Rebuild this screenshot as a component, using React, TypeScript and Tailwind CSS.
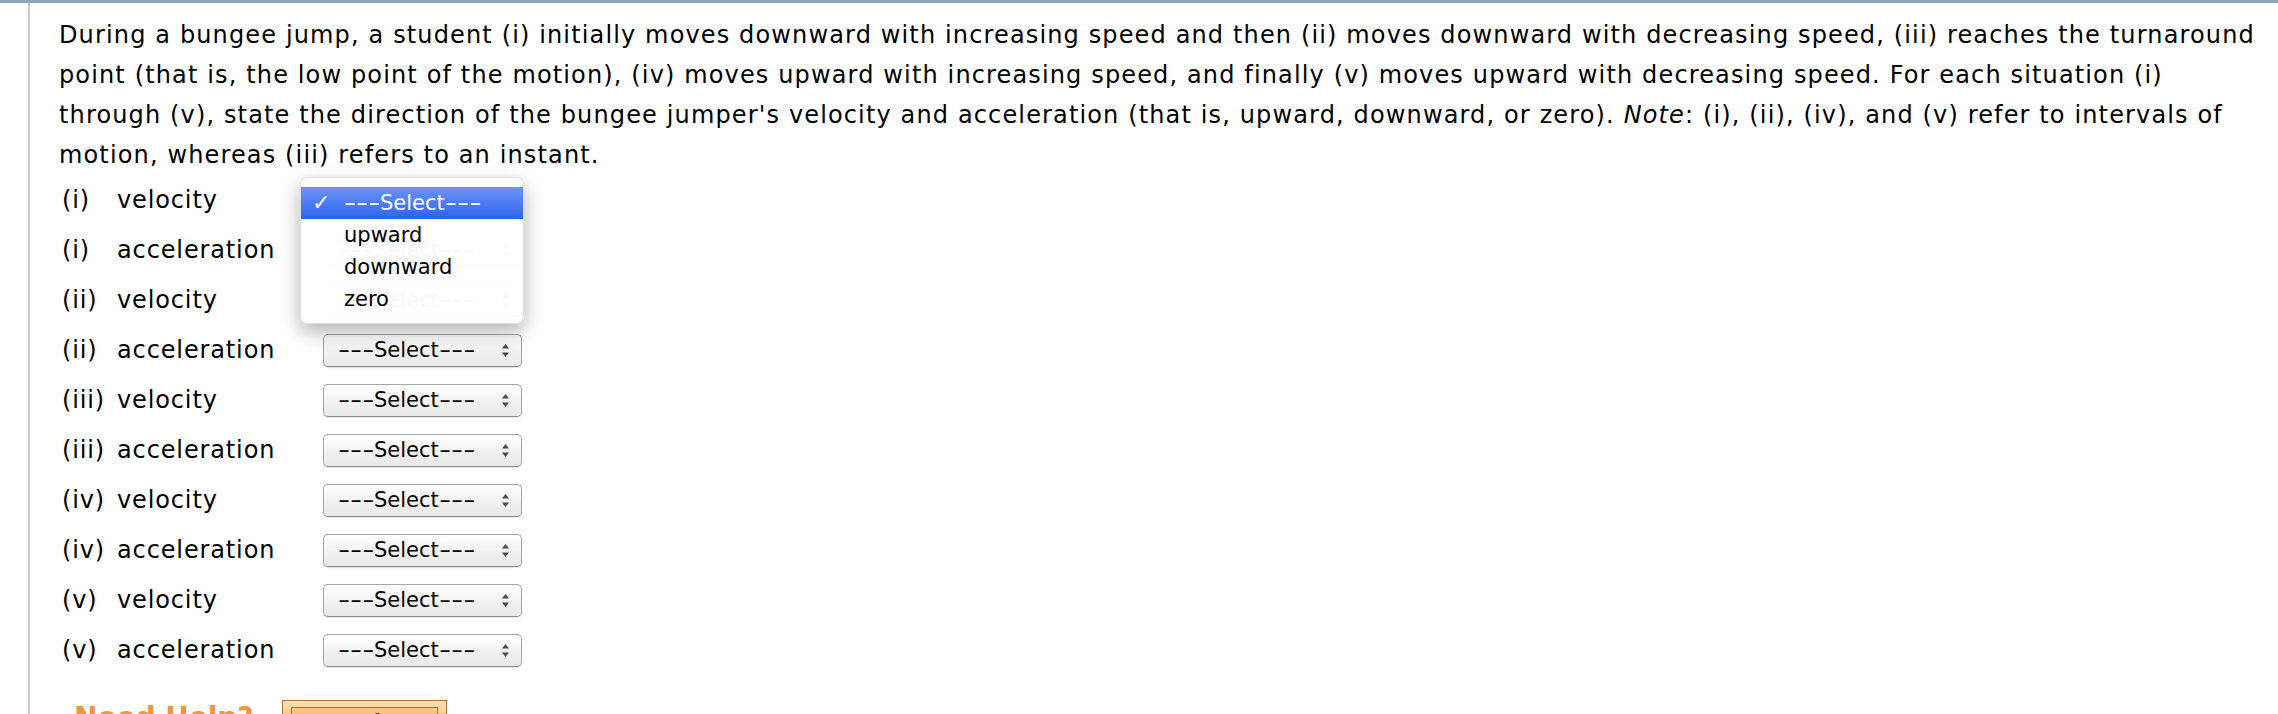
import React from "react";

const rows: [string, string][] = [
  ["(i)", "velocity"],
  ["(i)", "acceleration"],
  ["(ii)", "velocity"],
  ["(ii)", "acceleration"],
  ["(iii)", "velocity"],
  ["(iii)", "acceleration"],
  ["(iv)", "velocity"],
  ["(iv)", "acceleration"],
  ["(v)", "velocity"],
  ["(v)", "acceleration"],
];

function Dashes() {
  return (
    <span className="inline-block w-[36px]">
      <span className="inline-block origin-left scale-x-[1.6]">---</span>
    </span>
  );
}

function SelectText() {
  return (
    <span className="whitespace-nowrap font-['DejaVu_Sans',sans-serif] text-[21px] leading-none tracking-normal">
      <Dashes />
      Select
      <Dashes />
    </span>
  );
}

function Arrows() {
  return (
    <svg width="7" height="13" viewBox="0 0 7 13" className="shrink-0">
      <path d="M0 4.5 L3.5 0 L7 4.5 Z" fill="#4a4a4a" />
      <path d="M0 8.5 L7 8.5 L3.5 13 Z" fill="#4a4a4a" />
    </svg>
  );
}

function SelectBox() {
  return (
    <div className="flex h-[33px] w-[199px] items-center justify-between rounded-[5px] border border-[#a6a6a6] border-b-[#8e8e8e] bg-gradient-to-b from-[#ffffff] via-[#f3f3f3] to-[#e8e8e8] pl-[14px] pr-[12px] tracking-normal text-black shadow-[0_1px_1px_rgba(0,0,0,0.12)]">
      <SelectText />
      <Arrows />
    </div>
  );
}

export default function App() {
  return (
    <div className="relative h-[714px] w-full overflow-hidden bg-white font-['DejaVu_Sans',sans-serif] text-black">
      <div className="h-[3px] w-full bg-[#8ea5bd]" />
      <div className="flex h-full">
        <div className="w-[28px] shrink-0" />
        <div className="h-full border-l-2 border-[#c9c9c9] pl-[29px]">
          <p className="whitespace-nowrap pt-[12px] text-[24px] leading-[40px] tracking-[1.14px]">
            During a bungee jump, a student (i) initially moves downward with increasing speed and then (ii) moves downward with decreasing speed, (iii) reaches the turnaround
            <br />
            point (that is, the low point of the motion), (iv) moves upward with increasing speed, and finally (v) moves upward with decreasing speed. For each situation (i)
            <br />
            through (v), state the direction of the bungee jumper's velocity and acceleration (that is, upward, downward, or zero). <i>Note</i>: (i), (ii), (iv), and (v) refer to intervals of
            <br />
            motion, whereas (iii) refers to an instant.
          </p>
          <div className="ml-[3px] flex flex-col">
            {rows.map(([n, w], i) => (
              <div
                key={i}
                className="grid h-[50px] grid-cols-[55px_206px_199px] items-center text-[24px]"
              >
                <span className="tracking-[0.87px]">{n}</span>
                <span className="tracking-[0.87px]">{w}</span>
                <SelectBox />
              </div>
            ))}
          </div>
          <div className="ml-[15px] mt-[25px] flex items-start">
            <span className="w-[208px] shrink-0 pt-[4px] font-['DejaVu_Sans',sans-serif] text-[28px] font-bold leading-none text-[#f39636]">
              Need Help?
            </span>
            <div className="h-[44px] w-[165px] shrink-0 border border-[#b0773a] bg-gradient-to-b from-[#fde0b4] via-[#f9bd6e] to-[#f6a548] px-[8px] pt-[6px]">
              <div className="h-full w-full border border-[#a87446] bg-gradient-to-b from-[#fbc782] to-[#f6a548] pt-[3px] text-center text-[20px] font-bold leading-none text-[#4a3010]">
                Read It
              </div>
            </div>
          </div>
        </div>
      </div>

      {/* open dropdown popup */}
      <div className="absolute left-[300px] top-[177px] w-[224px] rounded-[7px] border border-[rgba(0,0,0,0.12)] bg-white/[0.97] pb-[8px] pt-[9px] shadow-[0_8px_20px_rgba(0,0,0,0.3)]">
        <div className="flex h-[32px] items-center bg-gradient-to-b from-[#6d93f6] to-[#2c62ee] text-white">
          <span className="w-[43px] pl-[11px] text-[22px] font-bold leading-none">✓</span>
          <SelectText />
        </div>
        {["upward", "downward", "zero"].map((t) => (
          <div key={t} className="flex h-[32px] items-center pl-[43px] text-[21px] leading-none">
            {t}
          </div>
        ))}
      </div>
    </div>
  );
}
